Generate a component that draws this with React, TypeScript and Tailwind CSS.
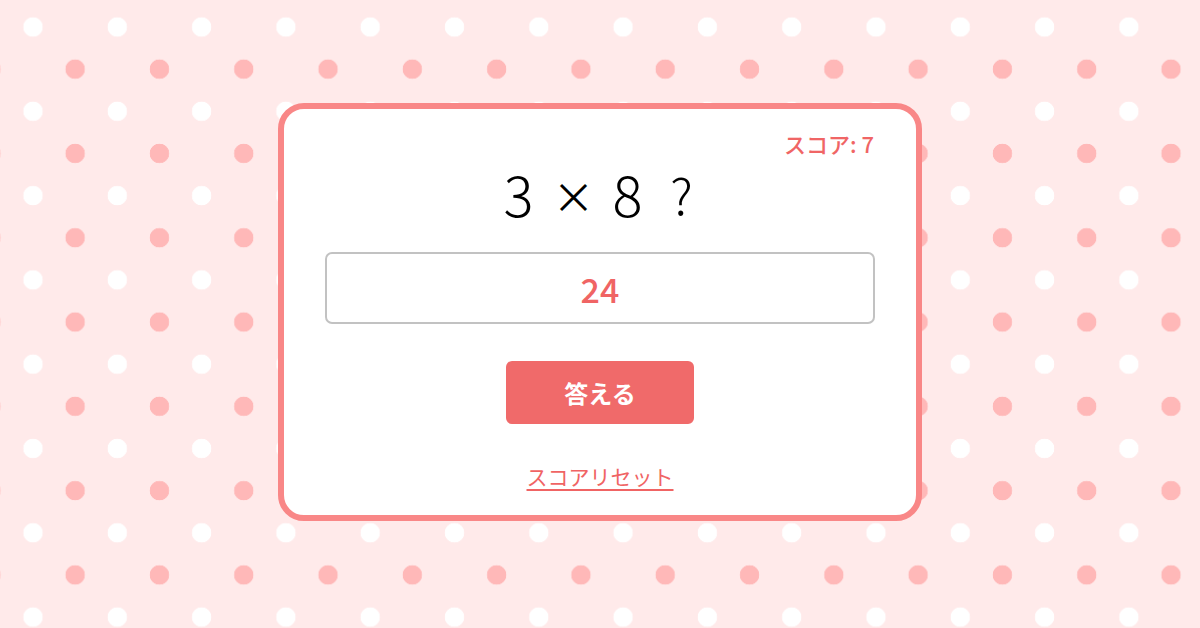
export default function App() {
  return (
    <div className="w-[1200px] h-[628px] overflow-hidden bg-[#ffeaea] bg-[image:radial-gradient(circle,#ffffff_9.5px,transparent_10px),radial-gradient(circle,#ffb8b8_9.5px,transparent_10px)] bg-[size:84.3px_84.3px] bg-[position:-9.15px_-15.15px,33px_27px] flex justify-center pt-[103px] font-['Noto_Sans_CJK_JP','Noto_Sans',sans-serif]">
      <div className="w-[644px] h-[418px] bg-white border-[6px] border-[#f98787] rounded-[26px] flex flex-col">
        <div className="pt-[18px] pr-[42px] flex justify-end">
          <span className="text-[22px] leading-[32px] font-medium text-[#f06565]">スコア: 7</span>
        </div>
        <div className="mt-[7px] h-[54px] flex items-center justify-center text-black leading-none">
          <span className="w-[55px] text-center text-[56px] font-light">3</span>
          <span className="w-[55px] text-center text-[42px] font-normal pt-[4px]">×</span>
          <span className="w-[53px] text-center text-[56px] font-light">8</span>
          <span className="w-[55px] text-center text-[50px] font-light">?</span>
        </div>
        <div className="mt-[32px] mx-auto w-[550px] h-[72px] border-2 border-[#c2c2c2] rounded-[7px] flex items-center justify-center">
          <span className="text-[34px] font-medium text-[#f06464]">24</span>
        </div>
        <button className="mt-[37px] mx-auto w-[188px] h-[63px] rounded-[6px] bg-[#f06a6a] text-white text-[24px] font-bold flex items-center justify-center">
          答える
        </button>
        <div className="mt-[37px] flex justify-center">
          <span className="text-[21px] leading-[30px] text-[#f06464] underline underline-offset-[4px]">スコアリセット</span>
        </div>
      </div>
    </div>
  );
}
